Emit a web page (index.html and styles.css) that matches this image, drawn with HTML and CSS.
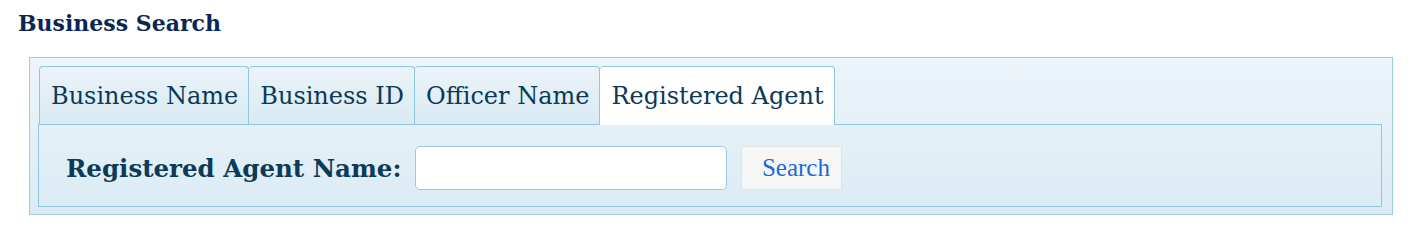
FILE: index.html
```html
<!DOCTYPE html>
<html>
  <head>
    <meta charset="utf-8">
    <link rel="stylesheet" href="styles.css">
  </head>
  <body>
    <div class="page">
      <h2 class="title">Business Search</h2>

      <div class="search-box">
        <ul class="tabs">
          <li class="tab">Business Name</li>
          <li class="tab">Business ID</li>
          <li class="tab">Officer Name</li>
          <li class="tab active">Registered Agent</li>
        </ul>
        <div class="tab-panel">
          <label class="field-label" for="agentName">Registered Agent Name:</label>
          <input id="agentName" class="field-input" type="text">
          <button class="search-btn" type="button">Search</button>
        </div>
      </div>
    </div>
  </body>
</html>
```

FILE: styles.css
```css
body {
  margin: 0;
  padding: 0;
  font-family: "DejaVu Serif", "Liberation Serif", serif;
  color: #0b3a58;
  background-color: white;
}
.page {
  padding: 8px 22px 0 18px;
}
.title {
  margin: 0 0 19px 0;
  font-size: 22px;
  font-weight: bold;
  color: #0b2652;
  line-height: 30px;
}
.search-box {
  margin-left: 11px;
  border: 1px solid #9fcde0;
  background: linear-gradient(#ecf4fa, #dbebf4);
  padding: 8px 10px 7px 8px;
}
.tabs {
  display: flex;
  list-style: none;
  margin: 0 0 0 1px;
  padding: 0;
}
.tab {
  height: 58px;
  box-sizing: border-box;
  display: flex;
  align-items: center;
  padding: 0 10px 0 11px;
  font-size: 24px;
  border: 1px solid #8fc7df;
  border-bottom: none;
  border-left: none;
  border-radius: 4px 4px 0 0;
  background: linear-gradient(#ebf3f9, #d9eaf3);
  cursor: pointer;
}
.tab:first-child {
  border-left: 1px solid #8fc7df;
}
.tab.active {
  background: white;
  height: 59px;
  margin-bottom: -1px;
  position: relative;
  z-index: 1;
}
.tab-panel {
  display: flex;
  align-items: center;
  border: 1px solid #8fc7df;
  padding: 21px 27px 16px 27px;
}
.field-label {
  font-size: 24.5px;
  font-weight: bold;
  color: #0d3a55;
  margin-right: 14px;
}
.field-input {
  width: 312px;
  height: 44px;
  box-sizing: border-box;
  border: 1px solid #9cc9dd;
  border-radius: 5px;
  background: white;
  font: inherit;
  margin-right: 14px;
}
.search-btn {
  width: 101px;
  height: 44px;
  background: #f6f6f6;
  border: 1px solid #e2e2e2;
  border-radius: 2px;
  color: #1a68de;
  font-family: "Liberation Serif", serif;
  font-size: 25px;
  padding: 0 0 0 8px;
  cursor: pointer;
}
```
